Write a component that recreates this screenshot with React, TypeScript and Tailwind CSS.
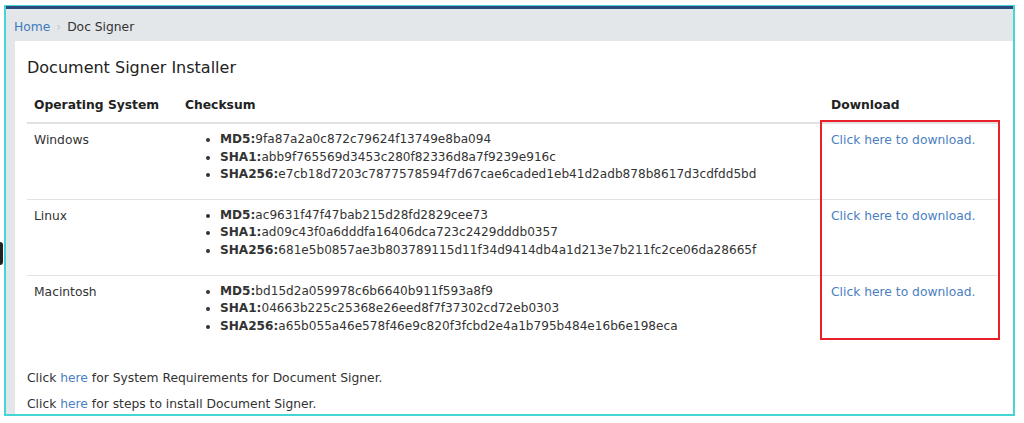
const rows = [
  {
    os: "Windows",
    md5: "9fa87a2a0c872c79624f13749e8ba094",
    sha1: "abb9f765569d3453c280f82336d8a7f9239e916c",
    sha256: "e7cb18d7203c7877578594f7d67cae6caded1eb41d2adb878b8617d3cdfdd5bd",
  },
  {
    os: "Linux",
    md5: "ac9631f47f47bab215d28fd2829cee73",
    sha1: "ad09c43f0a6dddfa16406dca723c2429dddb0357",
    sha256: "681e5b0857ae3b803789115d11f34d9414db4a1d213e7b211fc2ce06da28665f",
  },
  {
    os: "Macintosh",
    md5: "bd15d2a059978c6b6640b911f593a8f9",
    sha1: "04663b225c25368e26eed8f7f37302cd72eb0303",
    sha256: "a65b055a46e578f46e9c820f3fcbd2e4a1b795b484e16b6e198eca",
  },
];

const App = (): JSX.Element => {
  return (
    <div
      className="relative h-[423px] w-[1024px] overflow-hidden bg-white text-[12.3px] text-[#333]"
      style={{ fontFamily: '"DejaVu Sans", Verdana, sans-serif' }}
    >
      {/* bit of something dark peeking in from the left edge */}
      <div className="absolute left-0 top-[242px] h-[23px] w-[3px] rounded-r-[3px] bg-[#222]" />

      <div className="ml-1 mt-[5px] flex h-[411px] w-[1011px] flex-col border-x-2 border-b-2 border-t border-[#45d4d8] bg-[#e4e7ea]">
        <div className="h-[3px] bg-[#2b4a7c]" />
        {/* breadcrumb */}
        <div className="flex h-[32px] items-center pl-[8px] pt-[3px] leading-[18px]">
          <a className="text-[#3d7bbd]">Home</a>
          <span className="mx-[6px] text-[12px] text-[#c4c4c4]">›</span>
          <span className="text-[#333]">Doc Signer</span>
        </div>

        <div className="ml-[9px] flex-1 bg-white pl-[12px]">
          <h1 className="pt-[16px] text-[16px] leading-[22px] font-normal text-[#222]">
            Document Signer Installer
          </h1>

          <div className="relative mt-[17px] w-[972px]">
            <table className="w-full border-collapse text-left">
              <thead>
                <tr className="border-b-2 border-[#e2e2e2]">
                  <th className="w-[150px] px-[7px] pb-[8px] leading-[18px] font-bold text-[#222]">
                    Operating System
                  </th>
                  <th className="w-[646px] px-[8px] pb-[8px] leading-[18px] font-bold text-[#222]">
                    Checksum
                  </th>
                  <th className="px-[8px] pb-[8px] leading-[18px] font-bold text-[#222]">
                    Download
                  </th>
                </tr>
              </thead>
              <tbody>
                {rows.map((r, i) => (
                  <tr
                    key={r.os}
                    className={i < rows.length - 1 ? "h-[76px] border-b border-[#e2e2e2]" : "h-[76px]"}
                  >
                    <td className="px-[7px] pt-[7px] align-top leading-[18px]">{r.os}</td>
                    <td className="px-[8px] pt-[7px] align-top">
                      <ul className="list-disc pl-[35px] text-[12.1px] leading-[17.5px]">
                        <li>
                          <b>MD5:</b>
                          {r.md5}
                        </li>
                        <li>
                          <b>SHA1:</b>
                          {r.sha1}
                        </li>
                        <li>
                          <b>SHA256:</b>
                          {r.sha256}
                        </li>
                      </ul>
                    </td>
                    <td className="px-[8px] pt-[7px] align-top leading-[18px]">
                      <a className="text-[#4a7fc1]">Click here to download.</a>
                    </td>
                  </tr>
                ))}
              </tbody>
            </table>
            {/* red highlight drawn over the download column */}
            <div className="pointer-events-none absolute left-[793px] top-[24px] h-[220px] w-[180px] border-2 border-[#e8202a]" />
          </div>

          <p className="mt-[18px] leading-[18px]">
            Click <a className="text-[#4a7fc1]">here</a> for System Requirements for Document Signer.
          </p>
          <p className="mt-[8px] leading-[18px]">
            Click <a className="text-[#4a7fc1]">here</a> for steps to install Document Signer.
          </p>
        </div>
      </div>
    </div>
  );
};

export default App;
